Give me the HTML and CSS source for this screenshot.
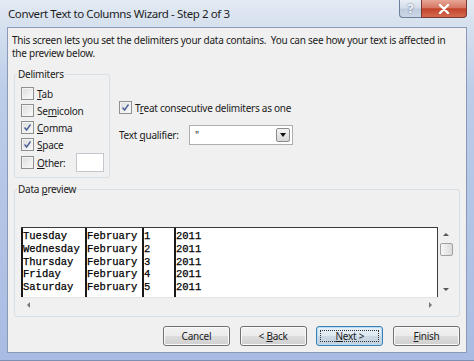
FILE: index.html
```html
<html>
	<head>
		<title>Convert Text to Columns Wizard - Step 2 of 3</title>
		<link rel="stylesheet" href="styles.css">
	</head>
	<body>
		<div class="window">
			<div class="titlebar">
				<div class="title">Convert Text to Columns Wizard - Step 2 of 3</div>
				<div class="cap cap-help">?</div>
				<div class="cap cap-close">
					<svg width="12" height="10" viewBox="0 0 12 10"><path d="M2 1 L10 9 M10 1 L2 9" stroke="#fff" stroke-width="2.4" stroke-linecap="round"/></svg>
				</div>
			</div>
			<div class="client">
				<p class="intro">This screen lets you set the delimiters your data contains.&nbsp; You can see how your text is affected in<br>the preview below.</p>
				<div class="middle">
					<fieldset class="group delims">
						<legend>Delimiters</legend>
						<div class="row"><span class="box"></span><span><u>T</u>ab</span></div>
						<div class="row"><span class="box"></span><span>Se<u>m</u>icolon</span></div>
						<div class="row"><span class="box checked"><svg width="9" height="9" viewBox="0 0 9 9"><path d="M1.5 4.5 L3.6 7 L7.5 1.5" fill="none" stroke="#4a5f96" stroke-width="1.4"/></svg></span><span><u>C</u>omma</span></div>
						<div class="row"><span class="box checked"><svg width="9" height="9" viewBox="0 0 9 9"><path d="M1.5 4.5 L3.6 7 L7.5 1.5" fill="none" stroke="#4a5f96" stroke-width="1.4"/></svg></span><span><u>S</u>pace</span></div>
						<div class="row other"><span class="box"></span><span><u>O</u>ther:</span><span class="textbox"></span></div>
					</fieldset>
					<div class="options">
						<div class="row"><span class="box checked"><svg width="9" height="9" viewBox="0 0 9 9"><path d="M1.5 4.5 L3.6 7 L7.5 1.5" fill="none" stroke="#4a5f96" stroke-width="1.4"/></svg></span><span>T<u>r</u>eat consecutive delimiters as one</span></div>
						<div class="qual">
							<span class="qual-label">Text <u>q</u>ualifier:</span>
							<div class="combo">
								<span class="combo-val">"</span>
								<span class="combo-btn"><span class="tri-down"></span></span>
							</div>
						</div>
					</div>
				</div>
				<fieldset class="group preview">
					<legend>Data <u>p</u>review</legend>
					<div class="pv">
						<div class="pv-box">
							<div class="col c1"><div>Tuesday</div><div>Wednesday</div><div>Thursday</div><div>Friday</div><div>Saturday</div></div>
							<div class="col c2"><div>February</div><div>February</div><div>February</div><div>February</div><div>February</div></div>
							<div class="col c3"><div>1</div><div>2</div><div>3</div><div>4</div><div>5</div></div>
							<div class="col c4"><div>2011</div><div>2011</div><div>2011</div><div>2011</div><div>2011</div></div>
						</div>
						<div class="vscroll">
							<span class="arr-up"></span>
							<span class="thumb"></span>
							<span class="arr-down"></span>
						</div>
						<div class="hscroll">
							<span class="arr-left"></span>
							<span class="arr-right"></span>
						</div>
					</div>
				</fieldset>
				<div class="buttons">
					<div class="btn">Cancel</div>
					<div class="btn">&lt;&nbsp;<u>B</u>ack</div>
					<div class="btn default"><span class="focus"><u>N</u>ext &gt;</span></div>
					<div class="btn"><u>F</u>inish</div>
				</div>
			</div>
		</div>
	</body>
</html>
```

FILE: styles.css
```css
html, body {
	margin: 0;
	padding: 0;
}
body {
	font-family: "Noto Sans", "Open Sans", sans-serif;
	font-size: 10px;
	letter-spacing: -0.25px;
	color: #1b1b1b;
	cursor: default;
}
u {
	text-decoration: underline;
	text-underline-offset: 1px;
}
.window {
	width: 474px;
	height: 361px;
	box-sizing: border-box;
	display: flex;
	flex-direction: column;
	padding: 0 7px 8px 7px;
	background: linear-gradient(to bottom, #e3eaf3 0, #d5e0ee 27px, #bccde9 90px, #a8bce3 100%);
	box-shadow: inset 0 -1px 0 #7d8fb3;
}
.titlebar {
	height: 27px;
	display: flex;
	align-items: flex-start;
	flex-shrink: 0;
}
.title {
	flex: 1;
	padding-top: 6px;
	font-size: 11.5px;
	letter-spacing: -0.4px;
	color: #1e1e1e;
	margin-left: 1px;
}
.cap {
	height: 18px;
	box-sizing: border-box;
	display: flex;
	align-items: center;
	justify-content: center;
	border: 1px solid #6e7f9c;
	border-top: none;
	letter-spacing: 0;
}
.cap-help {
	width: 22px;
	border-radius: 0 0 0 4px;
	border-right: none;
	background: linear-gradient(to bottom, #e9eef5 0, #d3dcea 48%, #bfcbdd 52%, #cbd6e6 100%);
	color: #f4f6fa;
	font-weight: bold;
	font-size: 12px;
	text-shadow: 0 0 2px #50607a;
}
.cap-close {
	width: 46px;
	border-radius: 0 0 4px 0;
	border-color: #7a3a30;
	background: linear-gradient(to bottom, #e8a596 0, #d77865 45%, #c2442c 52%, #d46a50 100%);
}
.client {
	flex: 1;
	display: flex;
	flex-direction: column;
	background: #f0f0f0;
	border: 1px solid #8999b6;
	padding: 6px 6px 6px 6px;
}
.intro {
	margin: 0 -2px;
	line-height: 12.5px;
}
.middle {
	display: flex;
	align-items: flex-start;
	margin-top: 9px;
}
.group {
	margin: 0;
	border: 1px solid #d5dfe5;
	border-radius: 3px;
	box-sizing: border-box;
}
.group legend {
	padding: 0 1px;
	margin-left: -4px;
	line-height: 13px;
}
.delims {
	width: 96px;
	padding: 4px 5px 5px 6px;
}
.row {
	display: flex;
	align-items: center;
	height: 17px;
	gap: 3px;
	white-space: nowrap;
}
.row.other {
	height: 19px;
}
.box {
	width: 13px;
	height: 13px;
	box-sizing: border-box;
	border: 1px solid #8e8f8f;
	background: linear-gradient(135deg, #dcdcdc, #fbfbfb);
	box-shadow: inset 0 0 0 1px #f4f4f4;
	display: flex;
	align-items: center;
	justify-content: center;
	flex-shrink: 0;
}
.textbox {
	margin-left: auto;
	width: 28px;
	height: 19px;
	box-sizing: border-box;
	background: #fff;
	border: 1px solid #c3c7cd;
}
.options {
	margin-left: 9px;
	margin-top: 31px;
}
.qual {
	display: flex;
	align-items: center;
	margin-top: 9px;
}
.qual-label {
	width: 70px;
}
.combo {
	width: 104px;
	height: 20px;
	box-sizing: border-box;
	border: 1px solid #abadb3;
	background: #fff;
	display: flex;
	align-items: center;
	padding: 0 2px 0 5px;
}
.combo-val {
	flex: 1;
}
.combo-btn {
	width: 14px;
	height: 14px;
	box-sizing: border-box;
	border: 1px solid #8c8c8c;
	border-radius: 2px;
	background: linear-gradient(to bottom, #f4f4f4, #d8d8d8);
	display: flex;
	align-items: center;
	justify-content: center;
}
.tri-down {
	width: 0;
	height: 0;
	border-left: 3.5px solid transparent;
	border-right: 3.5px solid transparent;
	border-top: 4px solid #111;
}
.preview {
	margin-top: 5px;
	padding: 0 5px 2px 6px;
}
.pv {
	display: grid;
	grid-template-columns: 417px 16px;
	grid-template-rows: 70px 17px;
	margin-top: 31px;
}
.pv-box {
	display: flex;
	background: #fff;
	border-top: 1px solid #3a3a3a;
	border-right: 1px solid #3a3a3a;
	box-sizing: border-box;
	font-family: "Liberation Mono", "Courier New", monospace;
	font-size: 10.5px;
	letter-spacing: 0;
	line-height: 12.8px;
	color: #000;
	-webkit-text-stroke: 0.25px #000;
	overflow: hidden;
}
.col {
	border-left: 2px solid #1a1a1a;
	padding-top: 2px;
	box-sizing: border-box;
	white-space: pre;
}
.c1 { width: 64px; }
.c2 { width: 57px; }
.c3 { width: 32px; }
.c4 { flex: 1; }
.vscroll {
	display: flex;
	flex-direction: column;
	align-items: center;
	padding-top: 6px;
}
.arr-up, .arr-down {
	width: 0;
	height: 0;
	border-left: 3px solid transparent;
	border-right: 3px solid transparent;
}
.arr-up {
	border-bottom: 3px solid #555;
}
.arr-down {
	border-top: 3px solid #555;
	margin-top: auto;
	margin-bottom: 6px;
}
.thumb {
	width: 13px;
	height: 13px;
	box-sizing: border-box;
	margin-top: 7px;
	border: 1px solid #a0a0a0;
	border-radius: 2px;
	background: linear-gradient(to right, #f6f6f6, #dcdcdc);
}
.hscroll {
	grid-column: 1;
	display: flex;
	align-items: center;
	justify-content: space-between;
	padding: 0 6px 2px 6px;
	border-top: 1px solid #e4e4e4;
}
.arr-left, .arr-right {
	width: 0;
	height: 0;
	border-top: 3px solid transparent;
	border-bottom: 3px solid transparent;
}
.arr-left {
	border-right: 3px solid #777;
}
.arr-right {
	border-left: 3px solid #777;
}
.buttons {
	margin-top: auto;
	display: flex;
	justify-content: flex-end;
	gap: 9.7px;
}
.btn {
	width: 67px;
	height: 20px;
	box-sizing: border-box;
	border: 1px solid #707070;
	border-radius: 3px;
	background: linear-gradient(to bottom, #f2f2f2 0, #ebebeb 48%, #dddddd 52%, #cfcfcf 100%);
	box-shadow: inset 0 0 0 1px #fbfbfb;
	display: flex;
	align-items: center;
	justify-content: center;
}
.btn.default {
	border-color: #3c7fb1;
	background: linear-gradient(to bottom, #e9f1f7 0, #dde8f1 48%, #ccd9e5 52%, #c3d1de 100%);
	box-shadow: inset 0 0 0 1px #b5def6;
	padding: 3px;
}
.focus {
	flex: 1;
	align-self: stretch;
	border: 1px dotted #333;
	display: flex;
	align-items: center;
	justify-content: center;
}
```
